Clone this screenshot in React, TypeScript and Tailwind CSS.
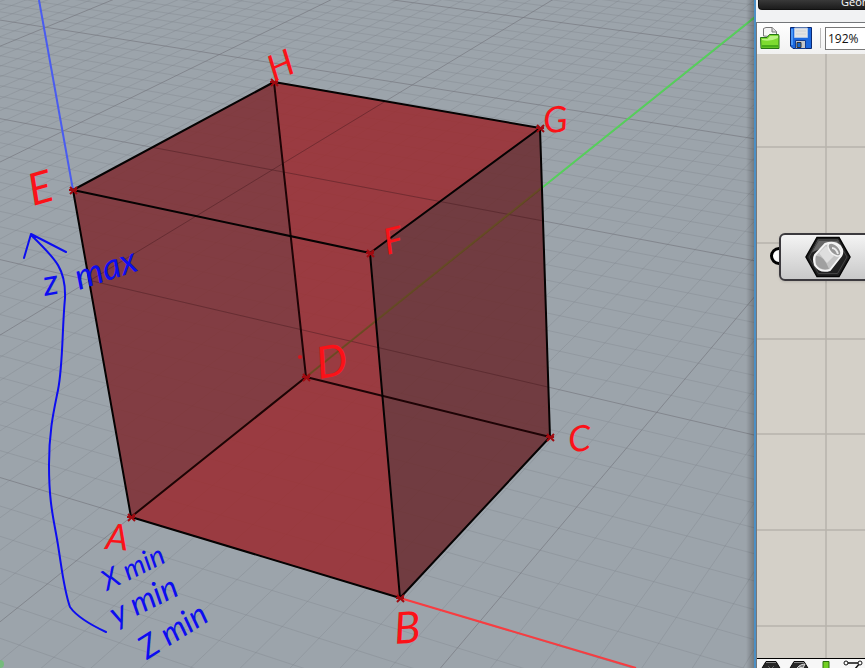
import React from "react";

type Point = [number, number];

// Ground plane projection: u runs along the red axis, v along the green axis,
// with the base of the box spanning 0..1 in both directions.
function project(u: number, v: number): Point {
  const w = 1 - 0.0751 * u + 0.1486 * v;
  return [(239 * u + 220.5 * v + 131) / w, (36.1 * u - 84 * v + 517) / w];
}

function segment(from: Point, to: Point): string {
  const a = project(from[0], from[1]);
  const b = project(to[0], to[1]);
  return `M${a[0].toFixed(1)} ${a[1].toFixed(1)}L${b[0].toFixed(1)} ${b[1].toFixed(1)}`;
}

const minor: string[] = [];
const major: string[] = [];
for (let i = -50; i <= 50; i++) {
  const u = i * 0.1267;
  (i % 10 === 0 ? major : minor).push(segment([u, -2], [u, 12]));
}
for (let i = -15; i <= 90; i++) {
  const v = i * 0.1305;
  (i % 10 === 0 ? major : minor).push(segment([-7, v], [7, v]));
}

const corners: Point[] = [
  [131, 517],
  [400, 598],
  [550, 437],
  [306, 377],
  [73, 190],
  [370, 253],
  [540, 128],
  [274, 82],
];

type Note = { text: string; x: number; y: number; turn: number; size: string };

const redNotes: Note[] = [
  { text: "A", x: 105, y: 549, turn: 4, size: "text-[36px]" },
  { text: "B", x: 395, y: 644, turn: -4, size: "text-[44px]" },
  { text: "C", x: 569, y: 452, turn: -4, size: "text-[36px]" },
  { text: "D", x: 319, y: 379, turn: -10, size: "text-[44px]" },
  { text: "E", x: 33, y: 206, turn: -16, size: "text-[44px]" },
  { text: "F", x: 387, y: 255, turn: -14, size: "text-[36px]" },
  { text: "G", x: 544, y: 133, turn: -4, size: "text-[36px]" },
  { text: "H", x: 274, y: 82, turn: -24, size: "text-[36px]" },
];

const blueNotes: Note[] = [
  { text: "X min", x: 107, y: 591, turn: -26, size: "text-[28px]" },
  { text: "y min", x: 116, y: 626, turn: -26, size: "text-[32px]" },
  { text: "Z min", x: 147, y: 660, turn: -32, size: "text-[32px]" },
  { text: "z", x: 45, y: 296, turn: -10, size: "text-[36px]" },
  { text: "max", x: 79, y: 290, turn: -18, size: "text-[36px]" },
];

function Notes({ items }: { items: Note[] }) {
  return (
    <>
      {items.map((n) => (
        <text key={n.text} className={n.size} transform={`translate(${n.x} ${n.y}) rotate(${n.turn})`}>
          {n.text}
        </text>
      ))}
    </>
  );
}

function Viewport() {
  return (
    <main className="relative min-w-0 flex-1 overflow-hidden bg-[#9ca4ab]">
      <svg className="block h-full w-full" viewBox="0 0 754 668" preserveAspectRatio="xMinYMin slice" aria-label="Perspective view of the box">
        <path d={minor.join("")} fill="none" stroke="#80878e" strokeOpacity="0.38" strokeWidth="1" />
        <path d={major.join("")} fill="none" stroke="#75767e" strokeOpacity="0.65" strokeWidth="1" />
        <path d="M131 517L755 17" stroke="#55d05a" strokeWidth="2" />
        <path d="M400 598L636 668" stroke="#f83c40" strokeWidth="2" />
        <path d="M39 0L73 190" stroke="#4a5cf0" strokeWidth="2" />
        <circle cx="0" cy="664" r="4" fill="#6cc070" opacity="0.8" />

        <g fillOpacity="0.85">
          <path d="M73 190L274 82L306 377L131 517Z" fill="#7e2c30" />
          <path d="M274 82L540 128L370 253L400 598L131 517L306 377Z" fill="#9a292e" />
          <path d="M370 253L540 128L550 437L400 598Z" fill="#6a2a2e" />
        </g>
        <clipPath id="box">
          <path d="M73 190L274 82L540 128L550 437L400 598L131 517Z" />
        </clipPath>
        <g clipPath="url(#box)" fill="none">
          <path d={major.join("")} stroke="#4a2026" strokeOpacity="0.45" />
          <path d="M306 377L545 185" stroke="#66501f" strokeOpacity="0.7" strokeWidth="2" />
        </g>
        <g fill="none" strokeLinejoin="round">
          <path d="M274 82L306 377L131 517M306 377L550 437" stroke="#1d0305" strokeWidth="2" />
          <path d="M73 190L274 82L540 128L550 437L400 598L131 517ZL370 253L540 128M370 253L400 598" stroke="#050202" strokeWidth="2" />
        </g>
        {corners.map(([x, y]) => (
          <path key={`${x}-${y}`} d={`M${x - 3} ${y - 3}l7 7m0-7l-7 7M${x - 4} ${y}h8`} stroke="#a00a10" strokeWidth="2" />
        ))}

        <g className="font-['Lato','Open_Sans',sans-serif] italic" fill="#fb1218">
          <Notes items={redNotes} />
        </g>
        <g className="font-['Lato','Open_Sans',sans-serif] italic" fill="#0d0df0">
          <Notes items={blueNotes} />
        </g>
        <circle cx="300" cy="357" r="2" fill="#d8161c" />
        <path
          d="M106 632C91 625 77 617 70 607C64 590 62 570 58 545C54 520 49 505 49 465C49 430 54 410 58 390C63 365 62 330 65 298C66 270 57 260 31 235M24 258L31 234L66 252"
          fill="none"
          stroke="#0d0df0"
          strokeWidth="2"
          strokeLinecap="round"
          strokeLinejoin="round"
        />
      </svg>
      <div className="absolute inset-y-0 right-0 w-2 bg-linear-to-r from-transparent to-black/25" />
    </main>
  );
}

function OpenIcon() {
  return (
    <svg width="20" height="24" viewBox="0 0 20 24" aria-hidden="true">
      <path d="M3.500 10V2.500L6 1.500H12L16.500 5.500V11Z" fill="#f6f6f6" stroke="#777" />
      <path d="M12 1.500V6H16.500" fill="#ddd" stroke="#777" />
      <path d="M1 22.500L.5 11.500H7L9.500 8.500H18.500L19 10V22.500Z" fill="#7ddb30" stroke="#267316" />
      <path d="M2 14Q10 16 18 12V10H10L7.500 13H2Z" fill="#baf284" />
      <path d="M2 19H18V21.500H2Z" fill="#48ad1a" />
    </svg>
  );
}

function SaveIcon() {
  return (
    <svg width="22" height="24" viewBox="0 0 22 24" aria-hidden="true">
      <path d="M.5 1.500H21.500V22.500H3L.5 20Z" fill="#1c68df" stroke="#0b2870" />
      <path d="M2 3V19" stroke="#5ba8ff" strokeWidth="1.500" />
      <path d="M4.500 2H17.500V11.500H4.500Z" fill="#e3e3e3" stroke="#a9c4e9" />
      <path d="M6 5H16M6 8H16" stroke="#cfd2d6" />
      <path d="M5.500 14.500H15.500V22.500H5.500Z" fill="#c5c7ca" stroke="#123c90" />
      <path d="M7 16.500H11V21.500H7Z" fill="#1764cc" stroke="#333" />
    </svg>
  );
}

function HexIcon() {
  return (
    <svg width="46" height="42" viewBox="0 0 46 42" aria-hidden="true">
      <path d="M12 1.500H34L45 21L34 40.500H12L1 21Z" fill="#202020" stroke="#050505" strokeWidth="1.500" />
      <path d="M13 3.500H33L37 11Q22 9 8 16L6 17Z" fill="#686868" />
      <path d="M13.500 4.500H32.500L42 21L32.500 37.500H13.500L4 21Z" fill="none" stroke="#444" />
      <path d="M10 19L20 8Q29 5 35 10Q39 15 36 20L25 34Q15 37 10 29Q8 23 10 19Z" fill="#c4c4c4" stroke="#f5f5f5" strokeWidth="2" />
      <path d="M11 20Q19 19 24 33Q15 35 11 28Z" fill="#a0a0a0" />
      <path d="M14 17L21 10L29 20L22 27Z" fill="#dedede" />
      <ellipse cx="29.500" cy="13.500" rx="4.500" ry="8" transform="rotate(-45 29.500 13.500)" fill="#989898" stroke="#f4f4f4" strokeWidth="1.500" />
      <path d="M27 12Q31 12 33 18" fill="none" stroke="#ececec" strokeWidth="2" />
    </svg>
  );
}

function SmallHex({ marked = false }: { marked?: boolean }) {
  return (
    <svg className="shrink-0" width="20" height="20" viewBox="0 0 20 20" aria-hidden="true">
      <path d="M5 1.500H15L19.500 9L15 17H5L.5 9Z" fill="#272727" stroke="#090909" />
      <path d="M5 2.500H15" stroke="#888" />
      {marked ? <path d="M6 12Q9 4 16 4L14 8L10 7" fill="#777" stroke="#ddd" /> : <path d="M7 6L10 9L13 6" fill="none" stroke="#666" />}
    </svg>
  );
}

function EditorPanel() {
  return (
    <aside className="flex w-[111px] shrink-0 flex-col overflow-hidden border-l-2 border-[#4c8fc4] bg-[#f1f2f3]">
      <header className="h-[22px] shrink-0 pl-[2px]">
        <div className="flex h-[10px] items-end justify-end overflow-hidden rounded-bl-sm border-b border-l border-[#111] bg-linear-to-b from-[#393939] to-[#1c1c1c] font-['Open_Sans',sans-serif] text-[11px] leading-[14px] text-white">
          <span className="w-6 shrink-0 whitespace-nowrap">Geom</span>
        </div>
      </header>
      <div className="flex min-h-0 flex-1 flex-col border-l border-t border-[#74777a]">
        <div className="flex h-[31px] shrink-0 items-center bg-linear-to-b from-white to-[#f1f1f1] pb-px pl-[3px]">
          <button className="shrink-0" aria-label="Open file">
            <OpenIcon />
          </button>
          <button className="ml-[10px] shrink-0" aria-label="Save file">
            <SaveIcon />
          </button>
          <span className="ml-2 h-5 w-px shrink-0 bg-[#bcbcbc]" />
          <input
            aria-label="Zoom"
            defaultValue="192%"
            className="ml-1 h-[23px] w-16 shrink-0 border border-[#777] bg-white px-[2px] font-['Open_Sans',sans-serif] text-xs text-[#111] outline-none"
          />
        </div>
        <div className="relative min-h-0 flex-1 overflow-hidden bg-[#d4d0c8]">
          <svg className="block h-full w-full" aria-hidden="true">
            <path d="M69 0V1000M0 93H2000M0 189H2000M0 285H2000M0 380H2000M0 476H2000M0 572H2000" stroke="#b7b3ac" strokeWidth="1.500" />
          </svg>
          <div className="absolute left-[13px] top-[193px] h-[18px] w-[18px] rounded-full border-[3px] border-black bg-white" />
          <div className="absolute left-[22px] top-[179px] flex h-[48px] w-52 items-center rounded-md border-2 border-[#3c3a3e] bg-linear-to-b from-[#f4f4f4] via-[#dedede] to-[#c9c9c9] pl-6 shadow-sm">
            <HexIcon />
          </div>
        </div>
        <footer className="flex h-[10px] shrink-0 items-start gap-2 overflow-hidden border-t border-black bg-[#f7f7f7] pl-1 pt-px">
          <SmallHex />
          <SmallHex marked />
          <svg className="ml-1 shrink-0" width="10" height="10" viewBox="0 0 10 10" aria-hidden="true">
            <path d="M2 1.500H8V10H2Z" fill="#72cf22" stroke="#28700b" />
          </svg>
          <svg className="ml-1 shrink-0" width="20" height="10" viewBox="0 0 20 10" aria-hidden="true">
            <path d="M3 3H17M17 3L12 9" stroke="#111" strokeWidth="1.500" />
            <circle cx="3" cy="3" r="2" fill="#fff" stroke="#111" />
            <circle cx="17" cy="3" r="2" fill="#fff" stroke="#111" />
          </svg>
        </footer>
      </div>
    </aside>
  );
}

export default function App() {
  return (
    <div className="flex h-screen w-full overflow-hidden bg-[#9ca4ab]">
      <Viewport />
      <EditorPanel />
    </div>
  );
}
